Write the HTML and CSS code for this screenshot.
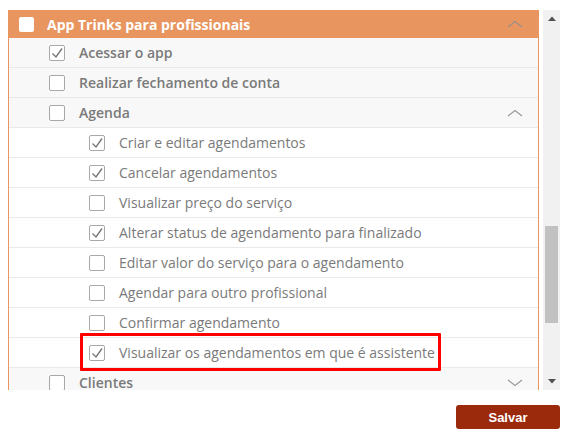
FILE: index.html
```html
<!DOCTYPE html>
<html lang="pt">
<head>
    <meta charset="UTF-8">
    <title>Permissões</title>
    <link rel="stylesheet" href="styles.css">
</head>
<body>
    <div class="page">
        <div class="panel">
            <div class="perm-list">
                <!-- grupo principal -->
                <div class="group-head">
                    <span class="box box-white"></span>
                    <span class="group-title">App Trinks para profissionais</span>
                    <svg class="chevron" width="16" height="8" viewBox="0 0 16 8"><polyline points="1,7 8,1.5 15,7" fill="none" stroke="#9a8f8a" stroke-width="1.3"/></svg>
                </div>

                <div class="row lvl1">
                    <span class="box checked"><svg width="14" height="14" viewBox="0 0 14 14"><polyline points="2.5,7.5 6,11 12,2.5" fill="none" stroke="#777" stroke-width="1.4"/></svg></span>
                    <span class="label">Acessar o app</span>
                </div>
                <div class="row lvl1">
                    <span class="box"></span>
                    <span class="label">Realizar fechamento de conta</span>
                </div>
                <div class="row lvl1">
                    <span class="box"></span>
                    <span class="label">Agenda</span>
                    <svg class="chevron" width="16" height="8" viewBox="0 0 16 8"><polyline points="1,7 8,1.5 15,7" fill="none" stroke="#9a9a9a" stroke-width="1.2"/></svg>
                </div>

                <div class="row lvl2">
                    <span class="box checked"><svg width="14" height="14" viewBox="0 0 14 14"><polyline points="2.5,7.5 6,11 12,2.5" fill="none" stroke="#777" stroke-width="1.4"/></svg></span>
                    <span class="label">Criar e editar agendamentos</span>
                </div>
                <div class="row lvl2">
                    <span class="box checked"><svg width="14" height="14" viewBox="0 0 14 14"><polyline points="2.5,7.5 6,11 12,2.5" fill="none" stroke="#777" stroke-width="1.4"/></svg></span>
                    <span class="label">Cancelar agendamentos</span>
                </div>
                <div class="row lvl2">
                    <span class="box"></span>
                    <span class="label">Visualizar preço do serviço</span>
                </div>
                <div class="row lvl2">
                    <span class="box checked"><svg width="14" height="14" viewBox="0 0 14 14"><polyline points="2.5,7.5 6,11 12,2.5" fill="none" stroke="#777" stroke-width="1.4"/></svg></span>
                    <span class="label">Alterar status de agendamento para finalizado</span>
                </div>
                <div class="row lvl2">
                    <span class="box"></span>
                    <span class="label">Editar valor do serviço para o agendamento</span>
                </div>
                <div class="row lvl2">
                    <span class="box"></span>
                    <span class="label">Agendar para outro profissional</span>
                </div>
                <div class="row lvl2">
                    <span class="box"></span>
                    <span class="label">Confirmar agendamento</span>
                </div>
                <div class="row lvl2 highlighted">
                    <span class="box checked"><svg width="14" height="14" viewBox="0 0 14 14"><polyline points="2.5,7.5 6,11 12,2.5" fill="none" stroke="#777" stroke-width="1.4"/></svg></span>
                    <span class="label">Visualizar os agendamentos em que é assistente</span>
                    <span class="mark"></span>
                </div>

                <div class="row lvl1">
                    <span class="box"></span>
                    <span class="label">Clientes</span>
                    <svg class="chevron" width="16" height="8" viewBox="0 0 16 8"><polyline points="1,1 8,6.5 15,1" fill="none" stroke="#9a9a9a" stroke-width="1.2"/></svg>
                </div>
            </div>

            <!-- barra de rolagem -->
            <div class="scrollbar">
                <div class="arrow"><svg width="8" height="5" viewBox="0 0 8 5"><polygon points="0,5 4,0.5 8,5" fill="#505050"/></svg></div>
                <div class="track"><div class="thumb"></div></div>
                <div class="arrow"><svg width="8" height="5" viewBox="0 0 8 5"><polygon points="0,0 8,0 4,4.5" fill="#505050"/></svg></div>
            </div>
        </div>

        <div class="actions">
            <button class="save-btn">Salvar</button>
        </div>
    </div>
</body>
</html>
```

FILE: styles.css
```css
body {
    margin: 0;
    background: white;
    font-family: 'Open Sans', 'Liberation Sans', sans-serif;
    color: #7a7a7a;
}
.page {
    padding: 10px 6px 0 8px;
}
.panel {
    display: flex;
    gap: 4px;
    height: 380px;
}
.perm-list {
    width: 531px;
    box-sizing: border-box;
    border-left: 1px solid #e8955f;
    border-right: 1px solid #e8955f;
    overflow: hidden;
}
.group-head {
    height: 28px;
    margin: 0 -1px;
    background: #e8955f;
    display: flex;
    align-items: center;
    padding-left: 11px;
    padding-right: 16px;
}
.group-title {
    margin-left: 13px;
    color: white;
    font-weight: 700;
    font-size: 14px;
    flex: 1;
}
.box {
    width: 16px;
    height: 16px;
    box-sizing: border-box;
    border: 1px solid #a8a8a8;
    border-radius: 2px;
    background: white;
    display: flex;
    align-items: center;
    justify-content: center;
    flex-shrink: 0;
}
.box-white {
    width: 15px;
    height: 15px;
    border: none;
    border-radius: 2px;
}
.row {
    height: 29px;
    border-bottom: 1px solid #e9e9e9;
    display: flex;
    align-items: center;
    padding-right: 15px;
    position: relative;
}
.lvl1 {
    background: #f8f8f8;
    padding-left: 40px;
}
.lvl1 .label {
    font-weight: 600;
}
.lvl2 {
    background: white;
    padding-left: 80px;
}
.label {
    margin-left: 14px;
    font-size: 14px;
    flex: 1;
    white-space: nowrap;
}
.chevron {
    flex-shrink: 0;
}
.highlighted .mark {
    position: absolute;
    z-index: 2;
    left: 71px;
    top: -5px;
    width: 361px;
    height: 38px;
    box-sizing: border-box;
    border: 3px solid #ff0000;
    border-radius: 1px;
}
.scrollbar {
    width: 17px;
    background: #f1f1f1;
    display: flex;
    flex-direction: column;
}
.arrow {
    height: 17px;
    display: flex;
    align-items: center;
    justify-content: center;
}
.track {
    flex: 1;
}
.thumb {
    margin: 199px 2px 0;
    height: 97px;
    background: #c1c1c1;
}
.actions {
    display: flex;
    justify-content: flex-end;
    margin-top: 15px;
}
.save-btn {
    width: 104px;
    height: 24px;
    border: none;
    border-radius: 3px;
    background: #9b2a0c;
    color: white;
    font-family: 'Liberation Sans', Arial, sans-serif;
    font-weight: 700;
    font-size: 13px;
    cursor: pointer;
}
```
